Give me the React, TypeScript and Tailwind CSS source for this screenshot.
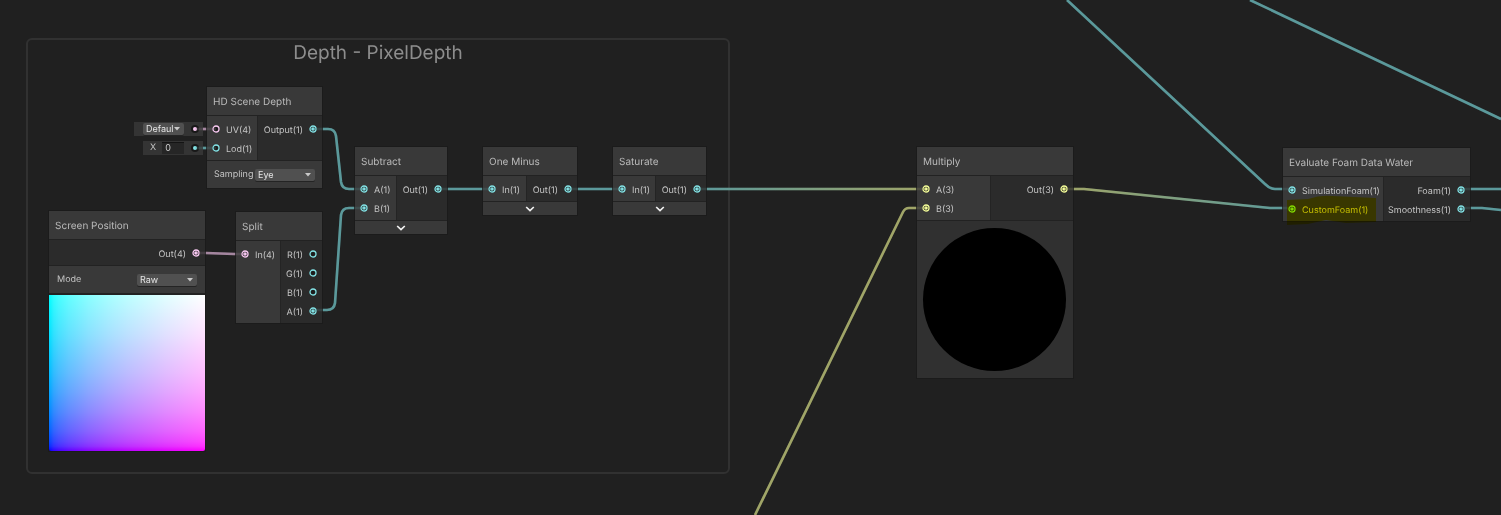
import type { ReactNode } from "react";

type PortColor = "teal" | "pink" | "yellow";

type Port = {
  label: string;
  color: PortColor;
  linked?: boolean;
};

const portColors: Record<PortColor, string> = {
  teal: "#84e4e7",
  pink: "#fbcbf4",
  yellow: "#f6ff9a",
};

const wires = [
  { d: "M313 129H328Q335 129 336 136L341 182Q342 189 349 189H364", stroke: "#5b999b" },
  { d: "M313 310H327Q334 310 335 303L341 215Q342 208 349 208H364", stroke: "#5b999b" },
  { d: "M196 253H206L234 254H245", stroke: "#a4869f" },
  { d: "M438 189H492", stroke: "#5b999b" },
  { d: "M568 189H622", stroke: "#5b999b" },
  { d: "M697 189H926", stroke: "url(#tealToYellow)" },
  { d: "M926 208H909Q905 208 903 212L755 515", stroke: "#a0a568" },
  { d: "M1064 189H1084L1270 208H1292", stroke: "url(#yellowToTeal)" },
  { d: "M1067 0L1265 184Q1270 189 1275 189H1292", stroke: "#5b999b" },
  { d: "M1250 0L1501 119", stroke: "#5b999b" },
  { d: "M1461 189H1501", stroke: "#5b999b" },
  { d: "M1461 208H1482L1501 210", stroke: "#5b999b" },
  { d: "M195 129H216", stroke: "#a4869f" },
  { d: "M195 148H216", stroke: "#5b999b" },
];

function Wires({ className }: { className: string }) {
  return (
    <svg
      className={`pointer-events-none absolute left-0 top-0 h-[515px] w-[1501px] ${className}`}
      viewBox="0 0 1501 515"
      fill="none"
      aria-hidden="true"
    >
      <defs>
        <linearGradient id="tealToYellow" gradientUnits="userSpaceOnUse" x1="697" y1="0" x2="926" y2="0">
          <stop stopColor="#5b999b" />
          <stop offset="1" stopColor="#a0a568" />
        </linearGradient>
        <linearGradient id="yellowToTeal" gradientUnits="userSpaceOnUse" x1="1064" y1="0" x2="1292" y2="0">
          <stop stopColor="#a0a568" />
          <stop offset="1" stopColor="#5b999b" />
        </linearGradient>
      </defs>
      {wires.map((wire) => (
        <path key={wire.d} d={wire.d} stroke={wire.stroke} strokeWidth="2.6" strokeLinejoin="round" />
      ))}
    </svg>
  );
}

function PortDot({ color, linked }: { color: PortColor; linked?: boolean }) {
  return (
    <svg className="size-2 shrink-0" viewBox="0 0 8 8" aria-hidden="true">
      <circle cx="4" cy="4" r="3" fill="#1c1c1c" stroke={portColors[color]} strokeWidth="1.3" />
      {linked ? <circle cx="4" cy="4" r="1.8" fill={portColors[color]} /> : null}
    </svg>
  );
}

function PortRow({ port, side }: { port: Port; side: "in" | "out" }) {
  return (
    <li className={`flex h-[19px] items-center gap-1.5 ${side === "out" ? "flex-row-reverse" : ""}`}>
      <PortDot color={port.color} linked={port.linked} />
      <span className="pt-[5px] leading-[14px]">{port.label}</span>
    </li>
  );
}

type NodeProps = {
  title: string;
  place: string;
  inputs?: Port[];
  inputsWidth?: string;
  outputs: Port[];
  children?: ReactNode;
};

function GraphNode({ title, place, inputs, inputsWidth = "", outputs, children }: NodeProps) {
  return (
    <section className={`absolute border border-[#1b1b1b] bg-[#222222] ${place}`}>
      <h2 className="flex h-7 items-center bg-[#393939] px-1.5 pt-0.5 text-[10px] text-[#bababa]">{title}</h2>
      <div className="mt-px flex">
        {inputs ? (
          <ul className={`shrink-0 border-r border-[#242424] bg-[#393939] py-[3px] pl-[5px] ${inputsWidth}`}>
            {inputs.map((port) => (
              <PortRow key={port.label} port={port} side="in" />
            ))}
          </ul>
        ) : null}
        <ul className="flex-1 bg-[#2b2b2b] py-[3px] pr-[5px]">
          {outputs.map((port) => (
            <PortRow key={port.label} port={port} side="out" />
          ))}
        </ul>
      </div>
      {children}
    </section>
  );
}

function CollapseButton() {
  return (
    <button
      type="button"
      aria-label="Collapse previews"
      className="mt-px flex h-[13px] w-full items-center justify-center bg-[#393939]"
    >
      <svg className="h-[6px] w-[10px]" viewBox="0 0 10 6" fill="none" aria-hidden="true">
        <path d="M1.2 1L5 4.6L8.8 1" stroke="#f2f2f2" strokeWidth="1.7" />
      </svg>
    </button>
  );
}

function Dropdown({ label, value, className }: { label: string; value: string; className: string }) {
  return (
    <span className={`relative flex h-3 items-center rounded-xs bg-[#505050] shadow-[0_1px_0_#242424] ${className}`}>
      <select
        aria-label={label}
        defaultValue={value}
        className="h-3 w-full appearance-none overflow-hidden pl-[3px] text-[9px] leading-3 text-[#e4e4e4] outline-none"
      >
        <option>{value}</option>
      </select>
      <svg className="pointer-events-none absolute right-1 h-1 w-1.5" viewBox="0 0 6 4" aria-hidden="true">
        <path d="M0 0H6L3 3.6Z" fill="#c8c8c8" />
      </svg>
    </span>
  );
}

export default function App() {
  return (
    <main className="relative h-screen min-h-[515px] w-full overflow-hidden bg-[#202020] font-['Inter',sans-serif] text-[9px] text-[#c4c4c4] [text-rendering:geometricPrecision]">
      <section className="absolute left-[26px] top-[38px] h-[436px] w-[704px] rounded-md border-2 border-[#313131]">
        <h1 className="text-center text-[19px] leading-[26px] text-[#8d8d8d]">Depth - PixelDepth</h1>
      </section>

      <Wires className="" />

      <div className="absolute left-[134px] top-[122px] flex h-3.5 w-[69px] items-center justify-between bg-[#343434] pl-[9px] pr-1">
        <Dropdown label="UV channel" value="Defaul" className="w-[41px]" />
        <span className="flex size-2 items-center justify-center rounded-full bg-[#181818]">
          <span className="size-1 rounded-full bg-[#fbcbf4]" />
        </span>
      </div>
      <div className="absolute left-[143px] top-[141px] flex h-3.5 w-[60px] items-center justify-between bg-[#343434] pl-[7px] pr-1">
        <label className="flex items-center gap-1.5">
          X
          <input
            type="text"
            defaultValue="0"
            className="h-3 w-[22px] bg-[#262626] pl-[3px] text-[9px] leading-3 text-[#cfcfcf] shadow-[inset_0_1px_0_#141414] outline-none"
          />
        </label>
        <span className="flex size-2 items-center justify-center rounded-full bg-[#181818]">
          <span className="size-1 rounded-full bg-[#84e4e7]" />
        </span>
      </div>

      <GraphNode
        title="HD Scene Depth"
        place="left-[206px] top-[86px] w-[117px]"
        inputsWidth="w-[51px]"
        inputs={[
          { label: "UV(4)", color: "pink" },
          { label: "Lod(1)", color: "teal" },
        ]}
        outputs={[{ label: "Output(1)", color: "teal", linked: true }]}
      >
        <div className="mt-px flex h-[27px] items-center justify-between bg-[#393939] px-[7px]">
          <span>Sampling</span>
          <Dropdown label="Sampling" value="Eye" className="w-[60px]" />
        </div>
      </GraphNode>

      <GraphNode
        title="Screen Position"
        place="left-[48px] top-[210px] w-[158px]"
        outputs={[{ label: "Out(4)", color: "pink", linked: true }]}
      >
        <div className="mt-px flex h-[27px] items-center justify-between bg-[#393939] px-2">
          <span>Mode</span>
          <Dropdown label="Mode" value="Raw" className="w-[60px]" />
        </div>
        <div className="mt-0.5 aspect-square w-full rounded-b-xs bg-[linear-gradient(to_right,#000000,#300000_3%,#460000_6%,#630000_12.5%,#890000_25%,#a50000_37.5%,#bc0000_50%,#e10000_75%,#ff0000),linear-gradient(to_top,#000000,#003000_3%,#004600_6%,#006300_12.5%,#008900_25%,#00a500_37.5%,#00bc00_50%,#00e100_75%,#00ff00),linear-gradient(#0000ff,#0000ff)] bg-blend-screen" />
      </GraphNode>

      <GraphNode
        title="Split"
        place="left-[235px] top-[211px] w-[88px]"
        inputsWidth="w-[45px]"
        inputs={[{ label: "In(4)", color: "pink", linked: true }]}
        outputs={[
          { label: "R(1)", color: "teal" },
          { label: "G(1)", color: "teal" },
          { label: "B(1)", color: "teal" },
          { label: "A(1)", color: "teal", linked: true },
        ]}
      />

      <GraphNode
        title="Subtract"
        place="left-[354px] top-[146px] w-[94px]"
        inputsWidth="w-[42px]"
        inputs={[
          { label: "A(1)", color: "teal", linked: true },
          { label: "B(1)", color: "teal", linked: true },
        ]}
        outputs={[{ label: "Out(1)", color: "teal", linked: true }]}
      >
        <CollapseButton />
      </GraphNode>

      <GraphNode
        title="One Minus"
        place="left-[482px] top-[146px] w-[96px]"
        inputsWidth="w-[44px]"
        inputs={[{ label: "In(1)", color: "teal", linked: true }]}
        outputs={[{ label: "Out(1)", color: "teal", linked: true }]}
      >
        <CollapseButton />
      </GraphNode>

      <GraphNode
        title="Saturate"
        place="left-[612px] top-[146px] w-[95px]"
        inputsWidth="w-[43px]"
        inputs={[{ label: "In(1)", color: "teal", linked: true }]}
        outputs={[{ label: "Out(1)", color: "teal", linked: true }]}
      >
        <CollapseButton />
      </GraphNode>

      <GraphNode
        title="Multiply"
        place="left-[916px] top-[146px] w-[158px]"
        inputsWidth="w-[74px]"
        inputs={[
          { label: "A(3)", color: "yellow", linked: true },
          { label: "B(3)", color: "yellow", linked: true },
        ]}
        outputs={[{ label: "Out(3)", color: "yellow", linked: true }]}
      >
        <div className="mt-px bg-[#303030] py-[7px] pl-1.5 pr-[7px]">
          <div className="aspect-square w-full rounded-full bg-black" />
        </div>
      </GraphNode>

      <GraphNode
        title="Evaluate Foam Data Water"
        place="left-[1282px] top-[147px] w-[189px]"
        inputsWidth="w-[101px]"
        inputs={[
          { label: "SimulationFoam(1)", color: "teal", linked: true },
          { label: "CustomFoam(1)", color: "teal", linked: true },
        ]}
        outputs={[
          { label: "Foam(1)", color: "teal", linked: true },
          { label: "Smoothness(1)", color: "teal", linked: true },
        ]}
      />

      <Wires className="opacity-20" />

      {/* highlighter stroke over the CustomFoam input */}
      <svg
        className="pointer-events-none absolute left-[1286px] top-[195px] h-[30px] w-[92px] mix-blend-multiply"
        viewBox="0 0 92 30"
        aria-hidden="true"
      >
        <path d="M1 5L22 4Q34 0 46 1L90 3V27L60 28L40 25L22 29L1 30Z" fill="#fff600" />
      </svg>
    </main>
  );
}
